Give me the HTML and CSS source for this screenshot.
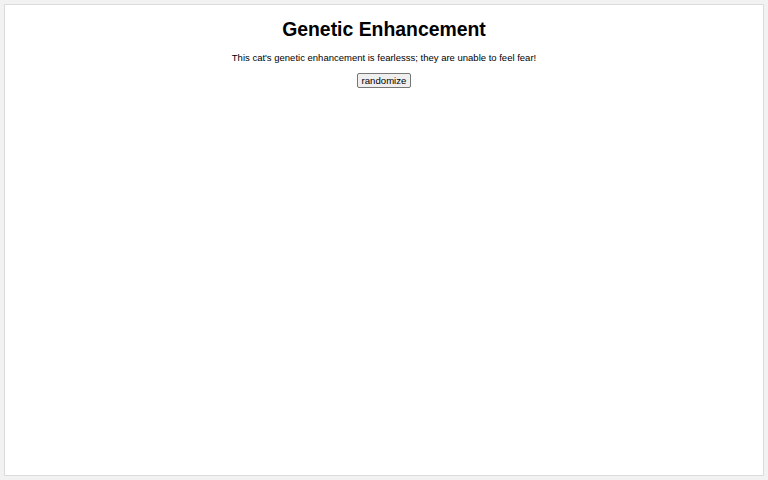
FILE: index.html
```html
<!DOCTYPE html>
<html lang="en">
<head>
    <meta charset="UTF-8">
    <title>Genetic Enhancement</title>
    <link rel="stylesheet" href="styles.css">
</head>
<body>
    <div class="card">
        <h1>Genetic Enhancement</h1>
        <p id="result">This cat's genetic enhancement is fearlesss; they are unable to feel fear!</p>
        <button class="btn" onclick="randomize()">randomize</button>
    </div>
    <script>
        var traits = [
            "fearlesss; they are unable to feel fear!",
            "night vision; they can see in total darkness!",
            "super speed; they can outrun anything!"
        ];

        function randomize() {
            var t = traits[Math.floor(Math.random() * traits.length)];
            document.getElementById("result").textContent = "This cat's genetic enhancement is " + t;
        }
    </script>
</body>
</html>
```

FILE: styles.css
```css
* {
    box-sizing: border-box;
}

body {
    margin: 0;
    padding: 4px;
    height: 480px;
    background-color: #f2f2f2;
    font-family: "Liberation Sans", Arial, sans-serif;
}

.card {
    height: 472px;
    background-color: #fff;
    border: 1px solid #dcdcdc;
    text-align: center;
    padding-top: 13px;
}

h1 {
    font-size: 19.4px;
    margin: 0 0 11px 0;
    color: #000;
}

p {
    font-size: 9.5px;
    margin: 0 0 7px 0;
    color: #000;
}

.btn {
    font-family: "Liberation Sans", Arial, sans-serif;
    font-size: 9.6px;
    padding: 1px 4px;
    background-color: #efefef;
    border: 1px solid #767676;
    border-radius: 2px;
    color: #000;
}
```
